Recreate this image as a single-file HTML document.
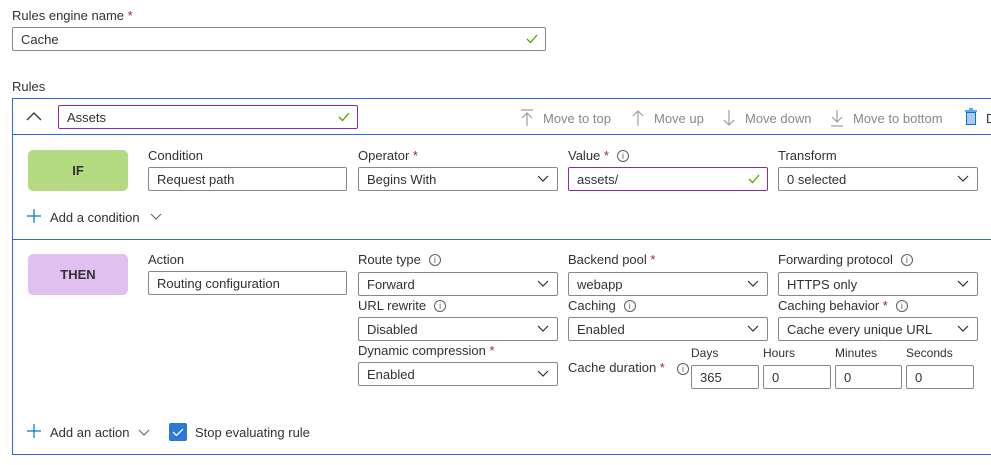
<!DOCTYPE html>
<html><head><style>
*{box-sizing:border-box;margin:0;padding:0}
body{width:991px;height:465px;background:#fff;font-family:"Liberation Sans",sans-serif;font-size:13px;color:#323130;position:relative;overflow:hidden}
.a{position:absolute}
.lbl{position:absolute;font-size:13px;color:#323130;white-space:nowrap}
.req{color:#a4262c}
.in{position:absolute;height:24px;border:1px solid #8a8886;border-radius:2px;padding:1px 8px 0;line-height:22px;font-size:13px;white-space:nowrap}
.pur{border-color:#8a2da5}
.dd svg{position:absolute;right:8px;top:7px}
.ck{position:absolute;right:7px;top:6px}
.hl{position:absolute;height:2px;background:#2f6bd6}
.info{display:inline-block;width:12px;height:12px;border:1px solid #605e5c;border-radius:50%;font-size:9px;line-height:10px;text-align:center;color:#605e5c;vertical-align:1px;margin-left:8px}
.tb{position:absolute;top:111px;color:#8a8886;font-size:13px;white-space:nowrap}
</style></head><body>
<div class="lbl" style="left:12px;top:8px">Rules engine name <span class="req">*</span></div>
<div class="in" style="left:12px;top:27px;width:534px">Cache<svg class="ck" width="12" height="10"><path d="M1 5l3.5 3.5L11 1" stroke="#57a300" fill="none" stroke-width="1.3"/></svg></div>
<div class="lbl" style="left:12px;top:79px">Rules</div>

<div class="a" style="left:12px;top:98px;width:990px;height:357px;border:1px solid #2f6bd6;border-right:none"></div>
<div class="hl" style="left:12px;top:134px;width:979px;height:1px"></div>
<div class="hl" style="left:12px;top:239px;width:979px;height:1px"></div>

<svg class="a" style="left:26px;top:112px" width="16" height="10"><path d="M1 8l7-7 7 7" stroke="#323130" fill="none" stroke-width="1.3"/></svg>
<div class="in pur" style="left:58px;top:105px;width:300px;height:24px">Assets<svg class="ck" width="12" height="10"><path d="M1 5l3.5 3.5L11 1" stroke="#57a300" fill="none" stroke-width="1.3"/></svg></div>

<svg class="a" style="left:520px;top:109px" width="14" height="18"><path d="M1 1h12M7 4v13M2 9l5-5 5 5" stroke="#a19f9d" fill="none" stroke-width="1.2"/></svg>
<div class="tb" style="left:543px">Move to top</div>
<svg class="a" style="left:631px;top:109px" width="14" height="18"><path d="M7 2v15M2 7l5-5 5 5" stroke="#a19f9d" fill="none" stroke-width="1.2"/></svg>
<div class="tb" style="left:654px">Move up</div>
<svg class="a" style="left:722px;top:109px" width="14" height="18"><path d="M7 1v15M2 11l5 5 5-5" stroke="#a19f9d" fill="none" stroke-width="1.2"/></svg>
<div class="tb" style="left:745px">Move down</div>
<svg class="a" style="left:830px;top:109px" width="14" height="18"><path d="M7 1v12M2 8l5 5 5-5M1 17h12" stroke="#a19f9d" fill="none" stroke-width="1.2"/></svg>
<div class="tb" style="left:853px">Move to bottom</div>
<svg class="a" style="left:964px;top:108px" width="14" height="18"><path d="M5 1h4M1 3h12" stroke="#0078d4" stroke-width="1.3"/><rect x="2.5" y="4.5" width="9" height="12" fill="#a9cdf0" stroke="#0078d4"/></svg>
<div class="tb" style="left:986px;color:#323130">D</div>

<div class="a" style="left:28px;top:150px;width:100px;height:41px;background:#b4db81;border-radius:5px;text-align:center;line-height:41px;font-weight:bold">IF</div>
<div class="lbl" style="left:148px;top:148px">Condition</div>
<div class="in" style="left:148px;top:167px;width:199px">Request path</div>
<div class="lbl" style="left:358px;top:148px">Operator <span class="req">*</span></div>
<div class="in dd" style="left:358px;top:167px;width:200px">Begins With<svg width="12" height="8"><path d="M1 1l5 5 5-5" stroke="#323130" fill="none" stroke-width="1.2"/></svg></div>
<div class="lbl" style="left:568px;top:148px">Value <span class="req">*</span><span class="info">i</span></div>
<div class="in pur" style="left:568px;top:167px;width:200px">assets/<svg class="ck" width="12" height="10"><path d="M1 5l3.5 3.5L11 1" stroke="#57a300" fill="none" stroke-width="1.3"/></svg></div>
<div class="lbl" style="left:778px;top:148px">Transform</div>
<div class="in dd" style="left:778px;top:167px;width:200px">0 selected<svg width="12" height="8"><path d="M1 1l5 5 5-5" stroke="#323130" fill="none" stroke-width="1.2"/></svg></div>

<svg class="a" style="left:26px;top:208px" width="16" height="16"><path d="M8 1v14M1 8h14" stroke="#0078d4" stroke-width="1.2"/></svg>
<div class="lbl" style="left:50px;top:210px">Add a condition</div>
<svg class="a" style="left:150px;top:213px" width="12" height="8"><path d="M1 1l5 5 5-5" stroke="#605e5c" fill="none" stroke-width="1"/></svg>

<div class="a" style="left:28px;top:254px;width:100px;height:41px;background:#e1bfee;border-radius:5px;text-align:center;line-height:41px;font-weight:bold">THEN</div>
<div class="lbl" style="left:148px;top:252px">Action</div>
<div class="in" style="left:148px;top:271px;width:199px">Routing configuration</div>
<div class="lbl" style="left:358px;top:252px">Route type<span class="info">i</span></div>
<div class="in dd" style="left:358px;top:272px;width:200px">Forward<svg width="12" height="8"><path d="M1 1l5 5 5-5" stroke="#323130" fill="none" stroke-width="1.2"/></svg></div>
<div class="lbl" style="left:568px;top:252px">Backend pool <span class="req">*</span></div>
<div class="in dd" style="left:568px;top:272px;width:200px">webapp<svg width="12" height="8"><path d="M1 1l5 5 5-5" stroke="#323130" fill="none" stroke-width="1.2"/></svg></div>
<div class="lbl" style="left:778px;top:252px">Forwarding protocol<span class="info">i</span></div>
<div class="in dd" style="left:778px;top:272px;width:200px">HTTPS only<svg width="12" height="8"><path d="M1 1l5 5 5-5" stroke="#323130" fill="none" stroke-width="1.2"/></svg></div>

<div class="lbl" style="left:358px;top:298px">URL rewrite<span class="info">i</span></div>
<div class="in dd" style="left:358px;top:317px;width:200px">Disabled<svg width="12" height="8"><path d="M1 1l5 5 5-5" stroke="#323130" fill="none" stroke-width="1.2"/></svg></div>
<div class="lbl" style="left:568px;top:298px">Caching<span class="info">i</span></div>
<div class="in dd" style="left:568px;top:317px;width:200px">Enabled<svg width="12" height="8"><path d="M1 1l5 5 5-5" stroke="#323130" fill="none" stroke-width="1.2"/></svg></div>
<div class="lbl" style="left:778px;top:298px">Caching behavior <span class="req">*</span><span class="info">i</span></div>
<div class="in dd" style="left:778px;top:317px;width:200px">Cache every unique URL<svg width="12" height="8"><path d="M1 1l5 5 5-5" stroke="#323130" fill="none" stroke-width="1.2"/></svg></div>

<div class="lbl" style="left:358px;top:343px">Dynamic compression <span class="req">*</span></div>
<div class="in dd" style="left:358px;top:362px;width:200px">Enabled<svg width="12" height="8"><path d="M1 1l5 5 5-5" stroke="#323130" fill="none" stroke-width="1.2"/></svg></div>
<div class="lbl" style="left:568px;top:360px">Cache duration <span class="req">*</span></div>
<div class="a" style="left:677px;top:361px"><span class="info" style="margin:0">i</span></div>
<div class="lbl" style="left:691px;top:346px;font-size:12px">Days</div>
<div class="lbl" style="left:763px;top:346px;font-size:12px">Hours</div>
<div class="lbl" style="left:835px;top:346px;font-size:12px">Minutes</div>
<div class="lbl" style="left:906px;top:346px;font-size:12px">Seconds</div>
<div class="in" style="left:691px;top:365px;width:68px">365</div>
<div class="in" style="left:763px;top:365px;width:68px">0</div>
<div class="in" style="left:835px;top:365px;width:67px">0</div>
<div class="in" style="left:906px;top:365px;width:68px">0</div>

<svg class="a" style="left:26px;top:423px" width="16" height="16"><path d="M8 1v14M1 8h14" stroke="#0078d4" stroke-width="1.2"/></svg>
<div class="lbl" style="left:50px;top:425px">Add an action</div>
<svg class="a" style="left:138px;top:429px" width="12" height="8"><path d="M1 1l5 5 5-5" stroke="#605e5c" fill="none" stroke-width="1"/></svg>
<div class="a" style="left:169px;top:423px;width:18px;height:18px;background:#2b78d8;border-radius:2px"><svg width="18" height="18"><path d="M4 9l3.5 3.5L14 6" stroke="#fff" fill="none" stroke-width="1.3"/></svg></div>
<div class="lbl" style="left:195px;top:425px">Stop evaluating rule</div>
</body></html>
